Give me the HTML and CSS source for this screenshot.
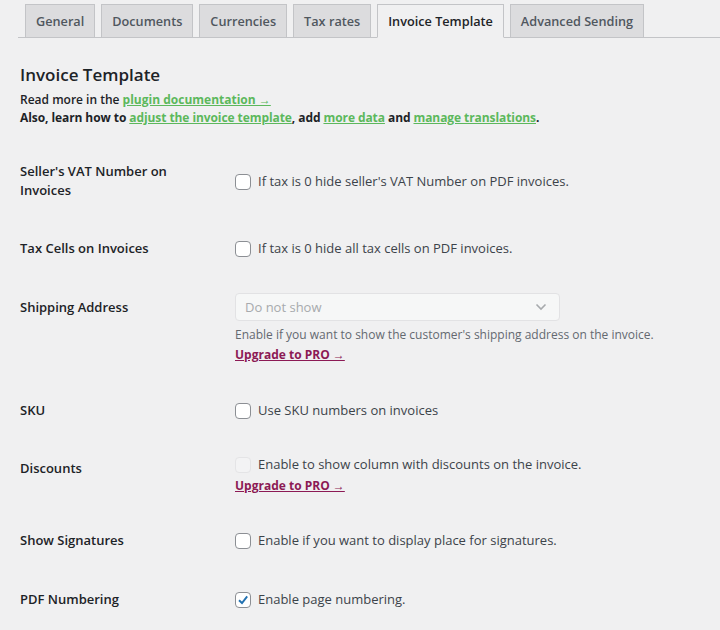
FILE: index.html
```html
<!DOCTYPE html>
<html lang="en">
<head>
<meta charset="utf-8">
<title>Invoice Template</title>
<link rel="stylesheet" href="styles.css">
</head>
<body>
<div class="wrap">
  <nav class="tabs">
    <a class="tab">General</a>
    <a class="tab">Documents</a>
    <a class="tab">Currencies</a>
    <a class="tab">Tax rates</a>
    <a class="tab active">Invoice Template</a>
    <a class="tab">Advanced Sending</a>
  </nav>
  <div class="content">
    <h2 class="title">Invoice Template</h2>
    <p class="intro intro-first">Read more in the <a class="green" href="#">plugin documentation →</a></p>
    <p class="intro intro-second">Also, learn how to <a class="green" href="#">adjust the invoice template</a>, add <a class="green" href="#">more data</a> and <a class="green" href="#">manage translations</a>.</p>

    <div class="form">
      <div class="row">
        <div class="label">Seller's VAT Number on Invoices</div>
        <div class="control middle">
          <label class="check"><span class="box"></span>If tax is 0 hide seller's VAT Number on PDF invoices.</label>
        </div>
      </div>
      <div class="row">
        <div class="label">Tax Cells on Invoices</div>
        <div class="control middle">
          <label class="check"><span class="box"></span>If tax is 0 hide all tax cells on PDF invoices.</label>
        </div>
      </div>
      <div class="row">
        <div class="label">Shipping Address</div>
        <div class="control shipping">
          <div class="select"><span>Do not show</span>
            <svg class="chev" width="12" height="8" viewBox="0 0 12 8"><path d="M1.5 1.5 L6 6 L10.5 1.5" fill="none" stroke="#a7aaad" stroke-width="1.6"/></svg>
          </div>
          <p class="desc">Enable if you want to show the customer's shipping address on the invoice.</p>
          <a class="upgrade" href="#">Upgrade to PRO →</a>
        </div>
      </div>
      <div class="row">
        <div class="label">SKU</div>
        <div class="control middle">
          <label class="check"><span class="box"></span>Use SKU numbers on invoices</label>
        </div>
      </div>
      <div class="row">
        <div class="label">Discounts</div>
        <div class="control middle">
          <label class="check"><span class="box disabled"></span>Enable to show column with discounts on the invoice.</label>
          <a class="upgrade upgrade-tight" href="#">Upgrade to PRO →</a>
        </div>
      </div>
      <div class="row">
        <div class="label">Show Signatures</div>
        <div class="control middle">
          <label class="check"><span class="box"></span>Enable if you want to display place for signatures.</label>
        </div>
      </div>
      <div class="row">
        <div class="label">PDF Numbering</div>
        <div class="control middle">
          <label class="check"><span class="box checked"><svg width="14" height="14" viewBox="0 0 14 14"><path d="M3 7.2 L6 10 L11.2 3.4" fill="none" stroke="#2271b1" stroke-width="1.9"/></svg></span>Enable page numbering.</label>
        </div>
      </div>
    </div>
  </div>
</div>
</body>
</html>
```

FILE: styles.css
```css
html, body {
  margin: 0;
  padding: 0;
  background: #f0f0f1;
}
body {
  font-family: "Open Sans", "Noto Sans", sans-serif;
  color: #3c434a;
  font-size: 13px;
}
.wrap {
  margin-left: 18px;
}
.tabs {
  display: flex;
  gap: 6px;
  padding: 4px 0 0 7px;
  border-bottom: 1px solid #c3c4c7;
  height: 33px;
}
.tab {
  box-sizing: border-box;
  height: 34px;
  padding: 0 10px;
  border: 1px solid #c3c4c7;
  background: #dcdcde;
  color: #50575e;
  font-size: 12.7px;
  font-weight: 600;
  line-height: 32px;
  white-space: nowrap;
}
.tab.active {
  background: #f0f0f1;
  border-bottom-color: #f0f0f1;
  color: #1d2327;
}
.content {
  padding-left: 2px;
}
.title {
  margin: 25px 0 0;
  font-size: 17px;
  font-weight: 600;
  line-height: 24px;
  color: #1d2327;
}
.intro {
  margin: 0;
  font-size: 12px;
  line-height: 18px;
  color: #1d2327;
}
.intro-first {
  margin-top: 4px;
  font-weight: 600;
}
.intro-second {
  font-weight: 700;
  letter-spacing: -0.08px;
}
.green {
  color: #5cb85c;
  font-weight: 700;
  text-decoration: underline;
}
.form {
  margin-top: 14px;
}
.row {
  display: grid;
  grid-template-columns: 215px 1fr;
}
.label {
  padding: 21px 0 19px;
  font-size: 13px;
  font-weight: 600;
  line-height: 18.5px;
  color: #1d2327;
  width: 160px;
}
.control {
  display: flex;
  flex-direction: column;
  padding: 15px 0;
}
.control.middle {
  justify-content: center;
  padding-top: 17px;
  padding-bottom: 15px;
}
.control.shipping {
  padding: 16px 0 16px;
  align-items: flex-start;
}
.check {
  display: flex;
  align-items: center;
  gap: 7px;
  line-height: 18px;
  font-size: 13px;
  color: #3c434a;
}
.box {
  box-sizing: border-box;
  width: 16px;
  height: 16px;
  margin-top: 2px;
  border: 1px solid #8c8f94;
  border-radius: 4px;
  background: #fff;
  display: flex;
  align-items: center;
  justify-content: center;
  flex: none;
}
.box.disabled {
  border-color: #e4e4e6;
  background: #f3f3f4;
}
.select {
  box-sizing: border-box;
  width: 325px;
  height: 28px;
  border: 1px solid #e2e2e4;
  border-radius: 4px;
  background: #f6f7f7;
  color: #a7aaad;
  display: flex;
  align-items: center;
  justify-content: space-between;
  padding: 0 12px 0 9px;
  font-size: 13px;
}
.desc {
  margin: 5px 0 0;
  line-height: 18px;
  font-size: 12px;
  color: #646970;
}
.upgrade {
  margin-top: 2px;
  line-height: 18px;
  font-size: 12px;
  font-weight: 700;
  color: #8c1a55;
  text-decoration: underline;
}
.upgrade-tight {
  margin-top: 4px;
}
```
